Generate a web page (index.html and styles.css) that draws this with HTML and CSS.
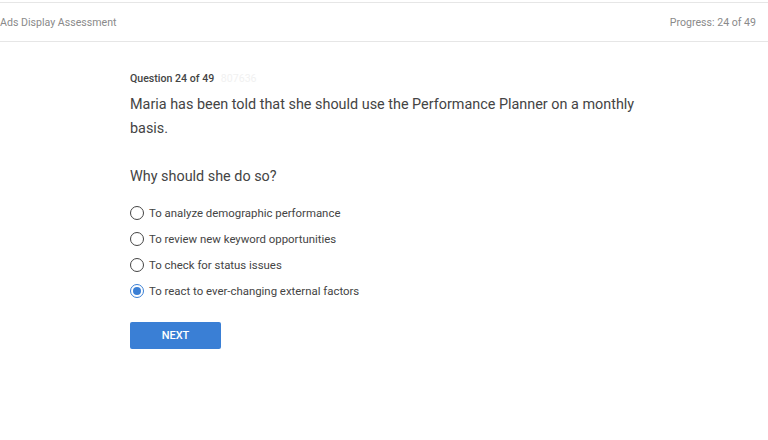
FILE: index.html
```html
<!DOCTYPE html>
<html>
<head>
<meta charset="utf-8">
<link rel="stylesheet" href="styles.css">
</head>
<body>
<header class="topbar">
  <span class="title">Ads Display Assessment</span>
  <span class="progress">Progress: 24 of 49</span>
</header>
<main class="quiz">
  <div class="qlabel">Question 24 of 49 <span class="qid">807636</span></div>
  <p class="qtext">Maria has been told that she should use the Performance Planner on a monthly basis.</p>
  <p class="qprompt">Why should she do so?</p>
  <ul class="options">
    <li class="option"><span class="radio"></span>To analyze demographic performance</li>
    <li class="option"><span class="radio"></span>To review new keyword opportunities</li>
    <li class="option"><span class="radio"></span>To check for status issues</li>
    <li class="option"><span class="radio checked"></span>To react to ever-changing external factors</li>
  </ul>
  <button class="next">NEXT</button>
</main>
</body>
</html>
```
FILE: styles.css
```css
html, body {
  margin: 0;
  padding: 0;
  background: #fff;
  font-family: Roboto, "Liberation Sans", Arial, sans-serif;
}
.topbar {
  margin-top: 2px;
  height: 38px;
  border-top: 1px solid #e6e6e6;
  border-bottom: 1px solid #e6e6e6;
  display: flex;
  align-items: center;
  justify-content: space-between;
  padding: 0 12px 0 0;
  font-size: 10.6px;
  color: #8a8a8a;
}
.quiz {
  width: 510px;
  margin-left: 130px;
  padding-top: 30px;
}
.qlabel {
  font-size: 10.6px;
  font-weight: 500;
  color: #444;
  line-height: 14px;
}
.qid { color: #f1f1f1; font-weight: 400; margin-left: 4px; }
.qtext {
  margin: 7px 0 0;
  font-size: 14.4px;
  line-height: 24px;
  color: #444;
}
.qprompt {
  margin: 24px 0 0;
  font-size: 14.4px;
  line-height: 24px;
  color: #444;
}
.options {
  list-style: none;
  margin: 11px 0 0;
  padding: 0;
}
.option {
  display: flex;
  align-items: center;
  height: 26px;
  font-size: 11.4px;
  color: #444;
}
.radio {
  width: 12px;
  height: 12px;
  border: 1.3px solid #444;
  border-radius: 50%;
  margin-right: 5px;
  box-sizing: content-box;
  position: relative;
}
.radio.checked {
  border-color: #3a7fd5;
}
.radio.checked::after {
  content: "";
  position: absolute;
  left: 2px;
  top: 2px;
  width: 8px;
  height: 8px;
  border-radius: 50%;
  background: #3a7fd5;
}
.next {
  margin-top: 18px;
  width: 91px;
  height: 27px;
  border: none;
  border-radius: 2px;
  background: #3a7fd5;
  color: #fff;
  font-family: Roboto, "Liberation Sans", Arial, sans-serif;
  font-size: 11px;
  font-weight: 500;
}
```
